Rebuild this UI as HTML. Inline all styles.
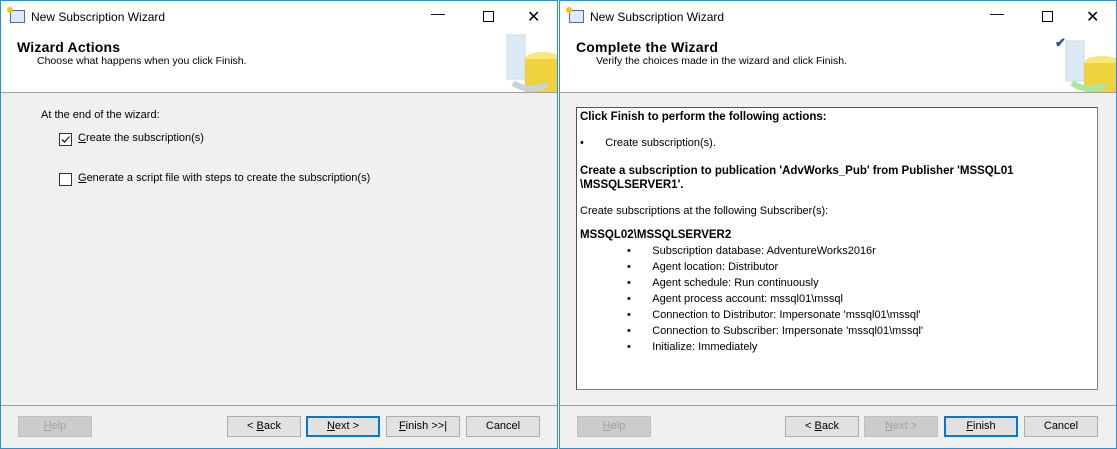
<!DOCTYPE html><html><head><meta charset="utf-8"><style>
*{margin:0;padding:0;box-sizing:border-box}
body{width:1117px;height:449px;background:#fff;font-family:"Liberation Sans",Arial,sans-serif;font-size:11px;color:#000;position:relative;overflow:hidden}
.win{position:absolute;top:0;height:449px;border:1px solid #2b8fd6;background:#f0f0f0}
.tb{position:absolute;left:0;right:0;top:0;height:32px;background:#fff}
.tt{position:absolute;left:30px;top:9px;font-size:12px}
.ic{position:absolute;left:9px;top:9px;width:15px;height:13px;border:1px solid #4a6fa5;background:#dfe9f5}
.ic:before{content:"";position:absolute;left:-4px;top:-4px;width:6px;height:6px;border-radius:50%;background:#f5c400}
.ctl{position:absolute;top:8px;font-size:14px;color:#000}
.hd{position:absolute;left:0;right:0;top:32px;height:60px;background:#fff;border-bottom:1px solid #a0a0a0;overflow:hidden}
.h1{position:absolute;left:16px;top:6px;font-weight:bold;font-size:14px;letter-spacing:0.2px}
.h2{position:absolute;left:36px;top:22px;font-size:10.5px}
.art{position:absolute;right:0;top:0;width:56px;height:59px}
.ft{position:absolute;left:0;right:0;top:404px;border-top:1px solid #a0a0a0}
.b{position:absolute;top:415px;height:21px;width:74px;border:1px solid #adadad;background:#e1e1e1;text-align:center;line-height:19px;font-size:11px}
.b.dis{color:#a0a0a0;border-color:#bfbfbf;background:#ccc}
.b.def{border:2px solid #0078d7;line-height:17px}
.cb{position:absolute;width:13px;height:13px;border:1px solid #333;background:#fff}
.t{position:absolute;white-space:nowrap}
.box{position:absolute;left:16px;top:106px;width:522px;height:283px;background:#fff;border:1px solid #828282;border-top-color:#555;border-left-color:#555}
.bo{font-weight:bold;font-size:11.5px}
</style></head><body>

<div class="win" style="left:0;width:558px">
<div class="tb"><div class="ic"></div><div class="tt">New Subscription Wizard</div>
<div class="ctl" style="left:430px;top:4px">—</div>
<div style="position:absolute;left:482px;top:10px;width:11px;height:11px;border:1px solid #000"></div>
<div class="ctl" style="left:526px;top:6px;font-size:16px">✕</div></div>
<div class="hd"><div class="h1">Wizard Actions</div><div class="h2">Choose what happens when you click Finish.</div>
<svg class="art" viewBox="0 0 56 59"><rect x="6" y="2" width="18" height="44" fill="#dce9f7" stroke="#c8d8ea"/><ellipse cx="42" cy="26" rx="18" ry="7" fill="#f8e878"/><rect x="24" y="26" width="36" height="35" fill="#f0d23c"/><path d="M12 50 q14 10 34 2" stroke="#c8d4dc" stroke-width="6" fill="none"/></svg></div>
<div class="t" style="left:40px;top:108px">At the end of the wizard:</div>
<div class="cb" style="left:58px;top:132px"><svg width="11" height="11" style="position:absolute;left:0;top:0"><path d="M2 5.5 L4.5 8 L9.5 2.5" stroke="#222" stroke-width="1.3" fill="none"/></svg></div>
<div class="t" style="left:77px;top:131px"><u>C</u>reate the subscription(s)</div>
<div class="cb" style="left:58px;top:172px"></div>
<div class="t" style="left:77px;top:171px"><u>G</u>enerate a script file with steps to create the subscription(s)</div>
<div class="ft"></div>
<div class="b dis" style="left:17px"><u>H</u>elp</div>
<div class="b" style="left:226px">&lt; <u>B</u>ack</div>
<div class="b def" style="left:305px"><u>N</u>ext &gt;</div>
<div class="b" style="left:385px"><u>F</u>inish &gt;&gt;|</div>
<div class="b" style="left:465px">Cancel</div>
</div>

<div class="win" style="left:559px;width:558px">
<div class="tb"><div class="ic"></div><div class="tt">New Subscription Wizard</div>
<div class="ctl" style="left:430px;top:4px">—</div>
<div style="position:absolute;left:482px;top:10px;width:11px;height:11px;border:1px solid #000"></div>
<div class="ctl" style="left:526px;top:6px;font-size:16px">✕</div></div>
<div class="hd"><div class="h1">Complete the Wizard</div><div class="h2">Verify the choices made in the wizard and click Finish.</div>
<div style="position:absolute;left:495px;top:2px;color:#2a4f9a;font-size:13px;font-weight:bold">✔</div>
<svg class="art" viewBox="0 0 56 59"><rect x="6" y="8" width="18" height="40" fill="#dce9f7" stroke="#c8d8ea"/><ellipse cx="42" cy="30" rx="18" ry="7" fill="#f8e878"/><rect x="24" y="30" width="36" height="31" fill="#f0d23c"/><path d="M12 50 q14 10 34 2" stroke="#a8e8a0" stroke-width="6" fill="none"/></svg></div>
<div class="box">
<div class="t bo" style="left:3px;top:3px">Click Finish to perform the following actions:</div>
<div class="t" style="left:3px;top:29px">•&nbsp;&nbsp;&nbsp;&nbsp;&nbsp;&nbsp;&nbsp;Create subscription(s).</div>
<div class="t bo" style="left:3px;top:57px">Create a subscription to publication 'AdvWorks_Pub' from Publisher 'MSSQL01</div>
<div class="t bo" style="left:3px;top:71px">\MSSQLSERVER1'.</div>
<div class="t" style="left:3px;top:97px">Create subscriptions at the following Subscriber(s):</div>
<div class="t bo" style="left:3px;top:121px">MSSQL02\MSSQLSERVER2</div>
<div class="t" style="left:50px;top:135px;line-height:16px">•&nbsp;&nbsp;&nbsp;&nbsp;&nbsp;&nbsp;&nbsp;Subscription database: AdventureWorks2016r<br>•&nbsp;&nbsp;&nbsp;&nbsp;&nbsp;&nbsp;&nbsp;Agent location: Distributor<br>•&nbsp;&nbsp;&nbsp;&nbsp;&nbsp;&nbsp;&nbsp;Agent schedule: Run continuously<br>•&nbsp;&nbsp;&nbsp;&nbsp;&nbsp;&nbsp;&nbsp;Agent process account: mssql01\mssql<br>•&nbsp;&nbsp;&nbsp;&nbsp;&nbsp;&nbsp;&nbsp;Connection to Distributor: Impersonate 'mssql01\mssql'<br>•&nbsp;&nbsp;&nbsp;&nbsp;&nbsp;&nbsp;&nbsp;Connection to Subscriber: Impersonate 'mssql01\mssql'<br>•&nbsp;&nbsp;&nbsp;&nbsp;&nbsp;&nbsp;&nbsp;Initialize: Immediately</div>
</div>
<div class="ft"></div>
<div class="b dis" style="left:17px"><u>H</u>elp</div>
<div class="b" style="left:225px">&lt; <u>B</u>ack</div>
<div class="b dis" style="left:304px"><u>N</u>ext &gt;</div>
<div class="b def" style="left:384px"><u>F</u>inish</div>
<div class="b" style="left:464px">Cancel</div>
</div>
</body></html>
